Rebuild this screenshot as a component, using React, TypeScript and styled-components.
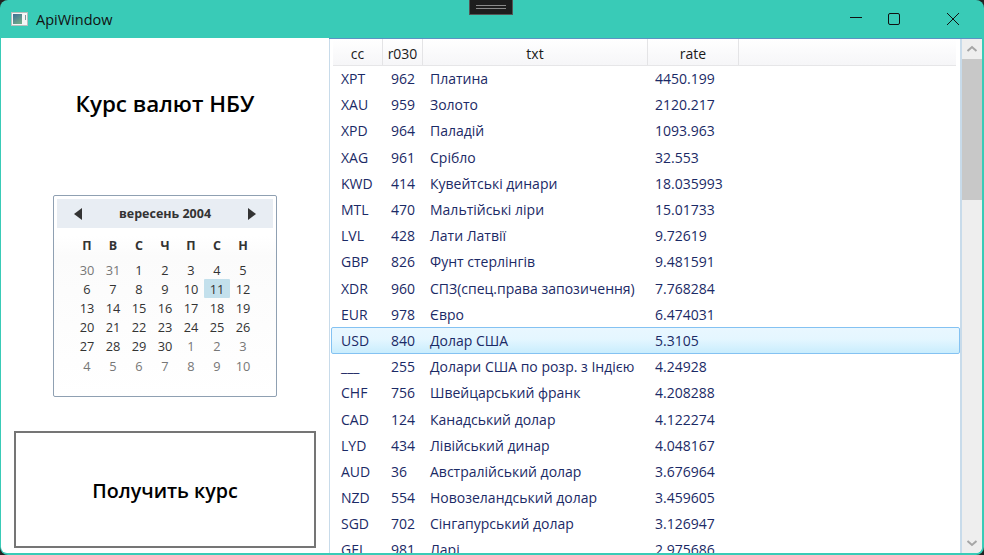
import styled, { createGlobalStyle } from 'styled-components';

const GlobalStyle = createGlobalStyle`
    html, body {
        margin: 0;
        padding: 0;
        height: 100%;
        overflow: hidden;
        background: #222222;
    }
    #root {
        height: 100%;
    }
`;

const FONT = `"Open Sans", "Noto Sans", "Liberation Sans", sans-serif`;

const RATES = [
    ['XPT', '962', 'Платина', '4450.199'],
    ['XAU', '959', 'Золото', '2120.217'],
    ['XPD', '964', 'Паладій', '1093.963'],
    ['XAG', '961', 'Срібло', '32.553'],
    ['KWD', '414', 'Кувейтські динари', '18.035993'],
    ['MTL', '470', 'Мальтійські ліри', '15.01733'],
    ['LVL', '428', 'Лати Латвії', '9.72619'],
    ['GBP', '826', 'Фунт стерлінгів', '9.481591'],
    ['XDR', '960', 'СПЗ(спец.права запозичення)', '7.768284'],
    ['EUR', '978', 'Євро', '6.474031'],
    ['USD', '840', 'Долар США', '5.3105'],
    ['___', '255', 'Долари США по розр. з Індією', '4.24928'],
    ['CHF', '756', 'Швейцарський франк', '4.208288'],
    ['CAD', '124', 'Канадський долар', '4.122274'],
    ['LYD', '434', 'Лівійський динар', '4.048167'],
    ['AUD', '36', 'Австралійський долар', '3.676964'],
    ['NZD', '554', 'Новозеландський долар', '3.459605'],
    ['SGD', '702', 'Сінгапурський долар', '3.126947'],
    ['GEL', '981', 'Ларі', '2.975686'],
];

const WEEK_DAYS = ['П', 'В', 'С', 'Ч', 'П', 'С', 'Н'];

const CALENDAR_DAYS: { day: number; muted?: boolean; selected?: boolean }[] = [
    { day: 30, muted: true },
    { day: 31, muted: true },
    ...Array.from({ length: 30 }, (_, i) => ({ day: i + 1, selected: i + 1 === 11 })),
    ...Array.from({ length: 10 }, (_, i) => ({ day: i + 1, muted: true })),
];

const App = () => {
    return (
        <Window>
            <GlobalStyle />
            <SnapHandle>
                <span />
                <span />
            </SnapHandle>
            <TitleBar>
                <WindowIcon width="17" height="14" viewBox="0 0 17 14">
                    <defs>
                        <linearGradient id="iconFill" x1="0" y1="0" x2="0.6" y2="1">
                            <stop offset="0" stopColor="#3f6f96" />
                            <stop offset="1" stopColor="#6fa98a" />
                        </linearGradient>
                    </defs>
                    <rect x="0.5" y="0.5" width="16" height="13" fill="#f4f6f6" stroke="#b9bdbd" />
                    <rect x="2" y="2" width="9" height="10" fill="url(#iconFill)" />
                    <rect x="14" y="3" width="1" height="5" fill="#7f9a9a" />
                </WindowIcon>
                <WindowTitle>ApiWindow</WindowTitle>
                <WindowButtons>
                    <WindowButton $gap={0}>
                        <svg width="14" height="14" viewBox="0 0 14 14">
                            <path d="M1 5.5h12" stroke="#111" strokeWidth="1" />
                        </svg>
                    </WindowButton>
                    <WindowButton $gap={24}>
                        <svg width="14" height="14" viewBox="0 0 14 14">
                            <rect x="1.5" y="1.5" width="11" height="11" rx="1.5" fill="none" stroke="#111" />
                        </svg>
                    </WindowButton>
                    <WindowButton $gap={45}>
                        <svg width="14" height="14" viewBox="0 0 14 14">
                            <path d="M1 1l12 12M13 1L1 13" stroke="#111" strokeWidth="1" />
                        </svg>
                    </WindowButton>
                </WindowButtons>
            </TitleBar>
            <Content>
                <LeftPanel>
                    <Heading>Курс валют НБУ</Heading>
                    <Calendar>
                        <CalendarHeader>
                            <ArrowLeft />
                            <MonthLabel>вересень 2004</MonthLabel>
                            <ArrowRight />
                        </CalendarHeader>
                        <DaysGrid>
                            {WEEK_DAYS.map((d, i) => (
                                <WeekDay key={i}>{d}</WeekDay>
                            ))}
                            {CALENDAR_DAYS.map((d, i) => (
                                <DayCell key={i} $muted={d.muted} $selected={d.selected}>
                                    {d.day}
                                </DayCell>
                            ))}
                        </DaysGrid>
                    </Calendar>
                    <GetButton>Получить курс</GetButton>
                </LeftPanel>
                <ListPanel>
                    <ListBody>
                        <HeaderRow>
                            <HeaderCell $w={50}>cc</HeaderCell>
                            <HeaderCell $w={40}>r030</HeaderCell>
                            <HeaderCell $w={225}>txt</HeaderCell>
                            <HeaderCell $w={91}>rate</HeaderCell>
                        </HeaderRow>
                        {RATES.map((r) => (
                            <Row key={r[0]} $selected={r[0] === 'USD'}>
                                <Cell $w={51} $pad={9}>{r[0]}</Cell>
                                <Cell $w={40} $pad={8}>{r[1]}</Cell>
                                <Cell $w={225} $pad={7}>{r[2]}</Cell>
                                <Cell $w={91} $pad={7}>{r[3]}</Cell>
                            </Row>
                        ))}
                    </ListBody>
                    <Scrollbar>
                        <ScrollButton>
                            <svg width="12" height="8" viewBox="0 0 12 8">
                                <path d="M1.5 6L6 2l4.5 4" fill="none" stroke="#a6a6a6" strokeWidth="2" />
                            </svg>
                        </ScrollButton>
                        <ScrollThumb />
                        <ScrollTrack />
                        <ScrollButton>
                            <svg width="12" height="8" viewBox="0 0 12 8">
                                <path d="M1.5 2L6 6l4.5-4" fill="none" stroke="#a6a6a6" strokeWidth="2" />
                            </svg>
                        </ScrollButton>
                    </Scrollbar>
                </ListPanel>
            </Content>
        </Window>
    );
};

const Window = styled.div`
    position: relative;
    display: flex;
    flex-direction: column;
    width: 984px;
    height: 555px;
    box-sizing: border-box;
    border-radius: 8px;
    overflow: hidden;
    background: #39cbb7;
    font-family: ${FONT};
`;

const SnapHandle = styled.div`
    position: absolute;
    top: 0;
    left: 469px;
    width: 44px;
    height: 15px;
    box-sizing: border-box;
    padding-top: 5px;
    background: #1e1e1e;
    border: 1px solid #555555;
    border-top: none;

    span {
        display: block;
        width: 30px;
        height: 1px;
        margin: 0 auto 2px;
        background: #8a8a8a;
    }
`;

const TitleBar = styled.div`
    display: flex;
    align-items: center;
    flex: 0 0 38px;
    padding-left: 11px;
`;

const WindowIcon = styled.svg`
    flex: none;
`;

const WindowTitle = styled.div`
    margin-left: 8px;
    font-size: 14.5px;
    color: #111111;
`;

const WindowButtons = styled.div`
    display: flex;
    margin-left: auto;
    padding-right: 24px;
`;

const WindowButton = styled.div<{ $gap: number }>`
    display: flex;
    width: 14px;
    height: 14px;
    margin-left: ${(p) => p.$gap}px;
`;

const Content = styled.div`
    display: flex;
    flex: 1;
    min-height: 0;
    margin: 0 2px 2px 1px;
    background: #ffffff;
    border-radius: 0 0 6px 6px;
    overflow: hidden;
`;

const LeftPanel = styled.div`
    display: flex;
    flex-direction: column;
    align-items: center;
    flex: 0 0 328px;
    box-sizing: border-box;
    padding: 50px 13px 0;
`;

const Heading = styled.div`
    height: 32px;
    font-size: 22.4px;
    line-height: 32px;
    font-weight: 600;
    color: #000000;
    white-space: nowrap;
`;

const Calendar = styled.div`
    width: 224px;
    height: 202px;
    box-sizing: border-box;
    margin-top: 75px;
    padding: 3px;
    background: linear-gradient(#ffffff, #ffffff 20%, #fbfbfb 30%, #ffffff);
    border: 1px solid #8fa0b2;
    border-radius: 2px;
`;

const CalendarHeader = styled.div`
    display: flex;
    align-items: center;
    justify-content: space-between;
    height: 29px;
    padding: 0 17px;
    background: #e8edf3;
`;

const ArrowLeft = styled.div`
    width: 0;
    height: 0;
    border-top: 6px solid transparent;
    border-bottom: 6px solid transparent;
    border-right: 8px solid #333333;
`;

const ArrowRight = styled.div`
    width: 0;
    height: 0;
    border-top: 6px solid transparent;
    border-bottom: 6px solid transparent;
    border-left: 8px solid #333333;
`;

const MonthLabel = styled.div`
    font-size: 12.5px;
    font-weight: 700;
    color: #333333;
`;

const DaysGrid = styled.div`
    display: grid;
    grid-template-columns: repeat(7, 26px);
    grid-template-rows: 30px;
    grid-auto-rows: 19.2px;
    justify-content: center;
    padding-top: 2px;
`;

const WeekDay = styled.div`
    display: flex;
    align-items: center;
    justify-content: center;
    font-size: 12.5px;
    font-weight: 700;
    color: #333333;
`;

const DayCell = styled.div<{ $muted?: boolean; $selected?: boolean }>`
    display: flex;
    align-items: center;
    justify-content: center;
    font-size: 12.8px;
    color: ${(p) => (p.$muted ? '#777777' : '#333333')};
    background: ${(p) => (p.$selected ? '#c3e0ec' : 'transparent')};
    border-radius: 1px;
`;

const GetButton = styled.button`
    align-self: stretch;
    height: 117px;
    margin-top: 34px;
    padding: 2px 0 0;
    background: #ffffff;
    border: 2px solid #757575;
    font-family: ${FONT};
    font-size: 19.7px;
    font-weight: 600;
    color: #000000;
`;

const ListPanel = styled.div`
    display: flex;
    flex: 1;
    min-width: 0;
    border-top: 1px solid #5d92c4;
`;

const ListBody = styled.div`
    flex: 1;
    min-width: 0;
    box-sizing: border-box;
    padding: 0 0 0 3px;
    border-left: 1px solid #c8dbea;
    border-right: 2px solid #c8dbea;
    overflow: hidden;
`;

const HeaderRow = styled.div`
    display: flex;
    height: 25.5px;
    margin-right: 4px;
    background: linear-gradient(#ffffff, #f6f6f8);
    border-bottom: 1px solid #e6e6e8;
`;

const HeaderCell = styled.div<{ $w: number }>`
    flex: 0 0 ${(p) => p.$w}px;
    box-sizing: border-box;
    border-right: 1px solid #e4e4e6;
    font-size: 14px;
    line-height: 30px;
    text-align: center;
    color: #1a1a1a;
`;

const Row = styled.div<{ $selected?: boolean }>`
    display: flex;
    align-items: center;
    box-sizing: border-box;
    height: 26.2px;
    margin-left: -2px;
    border: 1px solid ${(p) => (p.$selected ? '#84c2f2' : 'transparent')};
    border-radius: 2px;
    background: ${(p) => (p.$selected ? 'linear-gradient(#e9f7ff, #e4f6ff 45%, #c9edfd)' : 'transparent')};
`;

const Cell = styled.div<{ $w: number; $pad: number }>`
    flex: 0 0 ${(p) => p.$w}px;
    box-sizing: border-box;
    padding-left: ${(p) => p.$pad}px;
    font-size: 14px;
    white-space: nowrap;
    color: #1b2a66;
`;

const Scrollbar = styled.div`
    display: flex;
    flex-direction: column;
    flex: 0 0 20px;
    background: #eeeeee;
`;

const ScrollButton = styled.div`
    display: flex;
    align-items: center;
    justify-content: center;
    flex: 0 0 20px;
`;

const ScrollThumb = styled.div`
    flex: 0 0 141px;
    background: #c8c8c8;
`;

const ScrollTrack = styled.div`
    flex: 1;
`;

export default App;
